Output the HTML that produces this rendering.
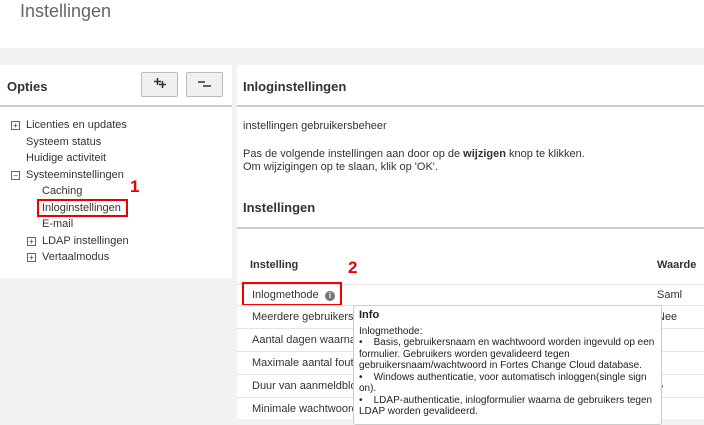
<!DOCTYPE html>
<html><head><style>
body{margin:0;width:704px;height:419px;overflow:hidden;background:#f2f2f2;font-family:"Liberation Sans",Arial,sans-serif;font-size:11px;color:#333;position:relative}
.a{position:absolute}
.top{left:0;top:0;width:704px;height:48px;background:#fff}
.top span{position:absolute;left:20px;top:1px;font-size:18px;color:#666}
.lp{left:0;top:65px;width:232px;height:213px;background:#fff}
.rp{left:237px;top:65px;width:467px;height:354px;background:#fff}
.h{font-weight:bold;font-size:13px;color:#333}
.line{height:2px;background:#ccc}
.btn{width:37px;height:25px;border:1px solid #bbb;background:#f0f0f0;border-radius:2px;box-sizing:border-box}
.tr{left:0;width:467px;height:1px;background:#e3e3e3}
.box{width:7px;height:7px;border:1px solid #666;font-size:8px;line-height:7px;text-align:center}
</style></head><body>
<div class="a top"><span>Instellingen</span></div>
<div class="a lp">
 <div class="a h" style="left:7px;top:14px">Opties</div>
 <div class="a btn" style="left:141px;top:7px"><svg width="35" height="23"><path d="M12 8.5h7M15.5 5v7M17 11.5h7M20.5 8v7" stroke="#333" stroke-width="1.6"/></svg></div>
 <div class="a btn" style="left:186px;top:7px"><svg width="35" height="23"><path d="M11 9h7M16 13h8" stroke="#333" stroke-width="1.6"/></svg></div>
 <div class="a line" style="left:0;top:40px;width:232px"></div>
 <div class="a box" style="left:11px;top:56px">+</div>
 <div class="a" style="left:26px;top:54px">Licenties en updates</div>
 <div class="a" style="left:26px;top:71px">Systeem status</div>
 <div class="a" style="left:26px;top:87px">Huidige activiteit</div>
 <div class="a box" style="left:11px;top:106px">−</div>
 <div class="a" style="left:26px;top:104px">Systeeminstellingen</div>
 <div class="a" style="left:42px;top:120px">Caching</div>
 <div class="a" style="left:130px;top:112px;color:#e00;font-weight:bold;font-size:17px">1</div>
 <div class="a" style="left:37px;top:134px;width:87px;height:14px;border:2px solid #e00"></div>
 <div class="a" style="left:42px;top:137px">Inloginstellingen</div>
 <div class="a" style="left:42px;top:153px">E-mail</div>
 <div class="a box" style="left:27px;top:172px">+</div>
 <div class="a" style="left:42px;top:170px">LDAP instellingen</div>
 <div class="a box" style="left:27px;top:188px">+</div>
 <div class="a" style="left:42px;top:186px">Vertaalmodus</div>
</div>
<div class="a rp">
 <div class="a h" style="left:6px;top:14px">Inloginstellingen</div>
 <div class="a line" style="left:0;top:40px;width:467px"></div>
 <div class="a" style="left:6px;top:55px">instellingen gebruikersbeheer</div>
 <div class="a" style="left:6px;top:83px">Pas de volgende instellingen aan door op de <b>wijzigen</b> knop te klikken.</div>
 <div class="a" style="left:6px;top:96px">Om wijzigingen op te slaan, klik op 'OK'.</div>
 <div class="a h" style="left:6px;top:135px">Instellingen</div>
 <div class="a line" style="left:0;top:162px;width:467px"></div>
 <div class="a" style="left:13px;top:194px;font-weight:bold">Instelling</div>
 <div class="a" style="left:420px;top:194px;font-weight:bold">Waarde</div>
 <div class="a" style="left:111px;top:193px;color:#e00;font-weight:bold;font-size:17px">2</div>
 <div class="a tr" style="top:219px"></div>
 <div class="a" style="left:5px;top:217px;width:96px;height:20px;border:2px solid #e00"></div>
 <div class="a" style="left:15px;top:224px">Inlogmethode</div>
 <div class="a" style="left:88px;top:226px;width:10px;height:10px;border-radius:50%;background:#777;color:#fff;font-size:8px;line-height:10px;text-align:center;font-weight:bold">i</div>
 <div class="a" style="left:420px;top:224px">Saml</div>
 <div class="a tr" style="top:240px"></div>
 <div class="a" style="left:15px;top:246px">Meerdere gebruikers</div>
 <div class="a" style="left:420px;top:246px">Nee</div>
 <div class="a tr" style="top:263px"></div>
 <div class="a" style="left:15px;top:269px">Aantal dagen waarna</div>
 <div class="a tr" style="top:286px"></div>
 <div class="a" style="left:15px;top:292px">Maximale aantal fout</div>
 <div class="a tr" style="top:309px"></div>
 <div class="a" style="left:15px;top:315px">Duur van aanmeldblo</div>
 <div class="a" style="left:420px;top:315px">5</div>
 <div class="a tr" style="top:332px"></div>
 <div class="a" style="left:15px;top:338px">Minimale wachtwoord</div>
</div>
<div class="a" style="left:353px;top:305px;width:309px;height:120px;background:#fff;border:1px solid #ccc;border-radius:3px;box-sizing:border-box;padding:4px 5px;font-size:10px;line-height:11.5px;color:#222">
 <div style="font-weight:bold;font-size:11px;margin-bottom:4px">Info</div>
 Inlogmethode:<br>•&nbsp;&nbsp;&nbsp;&nbsp;Basis, gebruikersnaam en wachtwoord worden ingevuld op een formulier. Gebruikers worden gevalideerd tegen gebruikersnaam/wachtwoord in Fortes Change Cloud database.<br>•&nbsp;&nbsp;&nbsp;&nbsp;Windows authenticatie, voor automatisch inloggen(single sign on).<br>•&nbsp;&nbsp;&nbsp;&nbsp;LDAP-authenticatie, inlogformulier waarna de gebruikers tegen LDAP worden gevalideerd.
</div>
</body></html>
